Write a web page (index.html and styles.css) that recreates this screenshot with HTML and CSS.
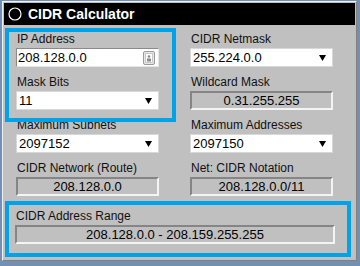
FILE: index.html
```html
<!DOCTYPE html>
<html lang="en">
<head>
  <meta charset="UTF-8">
  <meta name="viewport" content="width=device-width, initial-scale=1.0">
  <title>CIDR Calculator</title>
  <link rel="stylesheet" href="styles.css">
</head>
<body>

  <div class="panel">
    <div class="titlebar">
      <svg class="title-icon" width="14" height="14" viewBox="0 0 14 14">
        <circle cx="7" cy="7" r="6" fill="none" stroke="#fff" stroke-width="1.2"/>
      </svg>
      <span class="title">CIDR Calculator</span>
    </div>

    <div class="form">
      <div class="field">
        <label>IP Address</label>
        <div class="input">
          <span>208.128.0.0</span>
          <svg class="card-icon" width="12" height="14" viewBox="0 0 12 14">
            <rect x="0.5" y="0.5" width="11" height="13" rx="1.5" fill="#e8e8e8" stroke="#9a9a9a"/>
            <rect x="2.5" y="2.5" width="7" height="9" fill="#fff" stroke="#c8c8c8"/>
            <circle cx="6" cy="5.5" r="1.3" fill="#8a8a8a"/>
            <rect x="4" y="7.5" width="4" height="3" fill="#8a8a8a"/>
          </svg>
        </div>
      </div>
      <div class="field">
        <label>CIDR Netmask</label>
        <div class="select"><span>255.224.0.0</span><svg class="arrow" width="7" height="7" viewBox="0 0 7 7"><path d="M0 1h7L3.5 7z" fill="#000"/></svg></div>
      </div>

      <div class="field">
        <label>Mask Bits</label>
        <div class="select"><span>11</span><svg class="arrow" width="7" height="7" viewBox="0 0 7 7"><path d="M0 1h7L3.5 7z" fill="#000"/></svg></div>
      </div>
      <div class="field">
        <label>Wildcard Mask</label>
        <div class="output">0.31.255.255</div>
      </div>

      <div class="field">
        <label>Maximum Subnets</label>
        <div class="select"><span>2097152</span><svg class="arrow" width="7" height="7" viewBox="0 0 7 7"><path d="M0 1h7L3.5 7z" fill="#000"/></svg></div>
      </div>
      <div class="field">
        <label>Maximum Addresses</label>
        <div class="select"><span>2097150</span><svg class="arrow" width="7" height="7" viewBox="0 0 7 7"><path d="M0 1h7L3.5 7z" fill="#000"/></svg></div>
      </div>

      <div class="field">
        <label>CIDR Network (Route)</label>
        <div class="output">208.128.0.0</div>
      </div>
      <div class="field">
        <label>Net: CIDR Notation</label>
        <div class="output">208.128.0.0/11</div>
      </div>

      <div class="field wide">
        <label>CIDR Address Range</label>
        <div class="output">208.128.0.0 - 208.159.255.255</div>
      </div>
    </div>

    <!-- highlight frames drawn over the form -->
    <div class="highlight top-left"></div>
    <div class="highlight bottom"></div>
  </div>

</body>
</html>
```

FILE: styles.css
```css
body {
  margin: 0;
  background-color: #7190b3;
  font-family: "Liberation Sans", Arial, sans-serif;
}

.panel {
  position: relative;
  box-sizing: border-box;
  width: 355px;
  height: 260px;
  margin: 1px 0 0 2px;
  padding: 1px;
  background-color: #c0c0c0;
  border: 1px solid;
  border-color: #f0f0f0 #808080 #808080 #f0f0f0;
}

.titlebar {
  display: flex;
  align-items: center;
  gap: 6px;
  height: 22px;
  padding-left: 4px;
  background-color: #000;
}

.title {
  color: #fff;
  font-size: 14px;
  font-weight: bold;
}

.form {
  display: grid;
  grid-template-columns: 143px 143px;
  column-gap: 31px;
  row-gap: 8px;
  padding: 7px 0 0 12px;
}

.field {
  display: flex;
  flex-direction: column;
  gap: 2px;
}

.field.wide {
  grid-column: 1 / 3;
  width: 320px;
  margin-left: -1px;
  margin-top: 5px;
}

label {
  font-size: 12px;
  line-height: 14px;
  color: #111;
  padding-left: 1px;
}

.input,
.select,
.output {
  box-sizing: border-box;
  height: 19px;
  display: flex;
  align-items: center;
  font-size: 13px;
  color: #000;
}

.input {
  justify-content: space-between;
  padding: 0 3px 0 1px;
  background-color: #fff;
  border: 1px solid;
  border-color: #8a8a8a #e6e6e6 #e6e6e6 #8a8a8a;
}

.select {
  justify-content: space-between;
  padding: 0 6px 0 2px;
  background-color: #fff;
  border: 1px solid #d8d8d8;
}

.output {
  justify-content: center;
  border: 2px solid;
  border-color: #858585 #f4f4f4 #f4f4f4 #858585;
}

/* highlight frames */
.highlight {
  position: absolute;
  border: 4px solid #00a2e8;
  box-sizing: border-box;
  pointer-events: none;
}

.highlight.top-left {
  left: 2px;
  top: 26px;
  width: 171px;
  height: 94px;
}

.highlight.bottom {
  left: 2px;
  top: 199px;
  width: 346px;
  height: 56px;
}
```
